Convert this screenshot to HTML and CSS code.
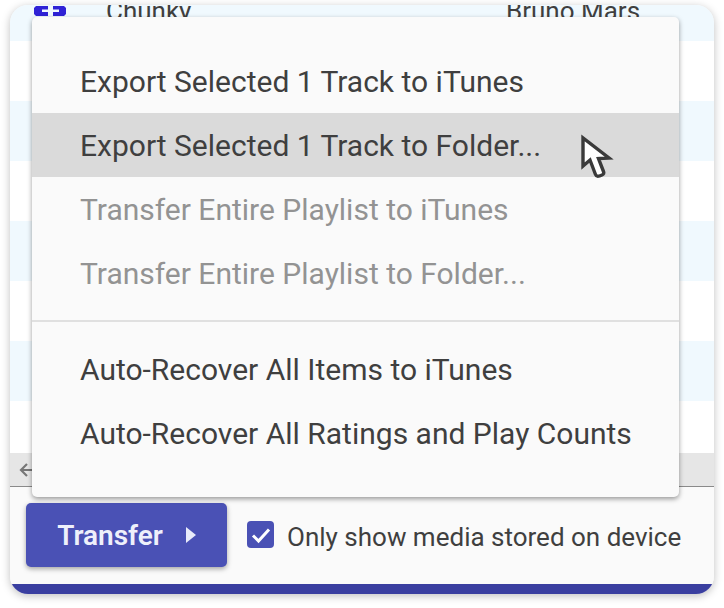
FILE: index.html
```html
<!DOCTYPE html>
<html lang="en">
<head>
<meta charset="utf-8">
<title>Transfer menu</title>
<link rel="stylesheet" href="styles.css">
</head>
<body>
<div class="window">
  <div class="tracks">
    <div class="row row-first">
      <svg class="track-icon" width="32" height="10" viewBox="0 0 32 10"><path fill="#2f22d6" d="M2 0h12v3.500H8v2.500h6v4H2L0 8V2zM19 0h11l2 2v6l-2 2H19V6h6V3.500h-6z"/></svg>
      <span class="title">Chunky</span>
      <span class="artist">Bruno Mars</span>
    </div>
    <div class="row"></div>
    <div class="row alt"></div>
    <div class="row"></div>
    <div class="row alt"></div>
    <div class="row"></div>
    <div class="row alt"></div>
    <div class="row row-last"></div>
  </div>
  <div class="scrollbar">
    <svg width="16" height="16" viewBox="0 0 16 16"><path d="M8 2 2 8l6 6M3 8h13" fill="none" stroke="#777" stroke-width="2.200"/></svg>
  </div>
  <div class="footer">
    <button class="transfer">
      <span class="transfer-label">Transfer</span>
      <svg width="10" height="16" viewBox="0 0 10 16"><path d="M0 0 10 8 0 16z" fill="#e8ebfa"/></svg>
    </button>
    <label class="check">
      <span class="box"><svg width="22" height="22" viewBox="0 0 22 22"><path d="M3 11.500 8.500 17 19 5.500" fill="none" stroke="#fff" stroke-width="3"/></svg></span>
      <span class="check-label">Only show media stored on device</span>
    </label>
  </div>
  <div class="bottom-bar"></div>
</div>
<div class="menu">
  <div class="item">Export Selected 1 Track to iTunes</div>
  <div class="item hover">Export Selected 1 Track to Folder...</div>
  <div class="item disabled">Transfer Entire Playlist to iTunes</div>
  <div class="item disabled">Transfer Entire Playlist to Folder...</div>
  <div class="divider"></div>
  <div class="item">Auto-Recover All Items to iTunes</div>
  <div class="item">Auto-Recover All Ratings and Play Counts</div>
</div>
<svg class="cursor" width="36" height="50" viewBox="0 0 36 50"><path d="M4 4V32L11 26 16.500 40.500Q17.500 43 20.500 42L23 41Q25.500 40 24.500 37.500L19.500 24.500 30 24z" fill="#fff" stroke="#3a3a3a" stroke-width="3.400" stroke-linejoin="miter"/></svg>
</body>
</html>
```
FILE: styles.css
```css
html, body { margin: 0; padding: 0; background: #fff; }
body { width: 724px; height: 608px; overflow: hidden; position: relative; font-family: Roboto, sans-serif; color: #3f3f3f; }
.window { margin: 5px 10px 0; width: 704px; height: 589px; border-radius: 18px; overflow: hidden; background: #fafafa; display: flex; flex-direction: column; box-shadow: 0 2px 8px rgba(0,0,0,.25); }
.tracks { display: flex; flex-direction: column; }
.row { height: 60px; background: #fff; flex: none; }
.row.alt, .row-first { background: #f0f9fe; }
.row-first { height: 36px; position: relative; overflow: hidden; font-size: 26px; line-height: 26px; }
.row-last { height: 52px; }
.track-icon { position: absolute; left: 24px; top: 1px; }
.title { position: absolute; left: 96px; top: -7px; }
.artist { position: absolute; left: 496px; top: -7px; }
.scrollbar { height: 33px; background: #e6e6e6; border-bottom: 1px solid #8a8a8a; padding-left: 9px; display: flex; align-items: center; }
.footer { flex: 1; display: flex; align-items: center; padding: 0 16px 2px; gap: 20px; background: #fafafa; }
.transfer { width: 201px; height: 64px; flex: none; background: #4a51b5; color: #eef0fb; border: 0; border-radius: 5px; font: 600 28px Roboto, sans-serif; display: flex; align-items: center; justify-content: center; gap: 23px; box-shadow: 0 2px 5px rgba(0,0,0,.35); padding: 0; }
.transfer-label { padding-top: 2px; }
.check { display: flex; align-items: center; gap: 13px; font-size: 26px; white-space: nowrap; }
.check-label { padding-top: 5px; }
.box { width: 27px; height: 27px; background: #4a51b5; border-radius: 4px; display: flex; align-items: center; justify-content: center; }
.bottom-bar { height: 10px; background: #3a3fa0; flex: none; }
.menu { position: absolute; left: 32px; top: 17px; width: 647px; padding: 32px 0; background: #fafafa; border-radius: 5px; box-shadow: 0 2px 5px rgba(0,0,0,.4); font-size: 30px; }
.item { height: 64px; line-height: 66px; padding-left: 48px; white-space: nowrap; }
.item.hover { background: #dadada; }
.item.disabled { color: #939393; }
.divider { height: 2px; background: #e0e0e0; margin: 15px 0; }
.cursor { position: absolute; left: 579px; top: 134px; }
```
